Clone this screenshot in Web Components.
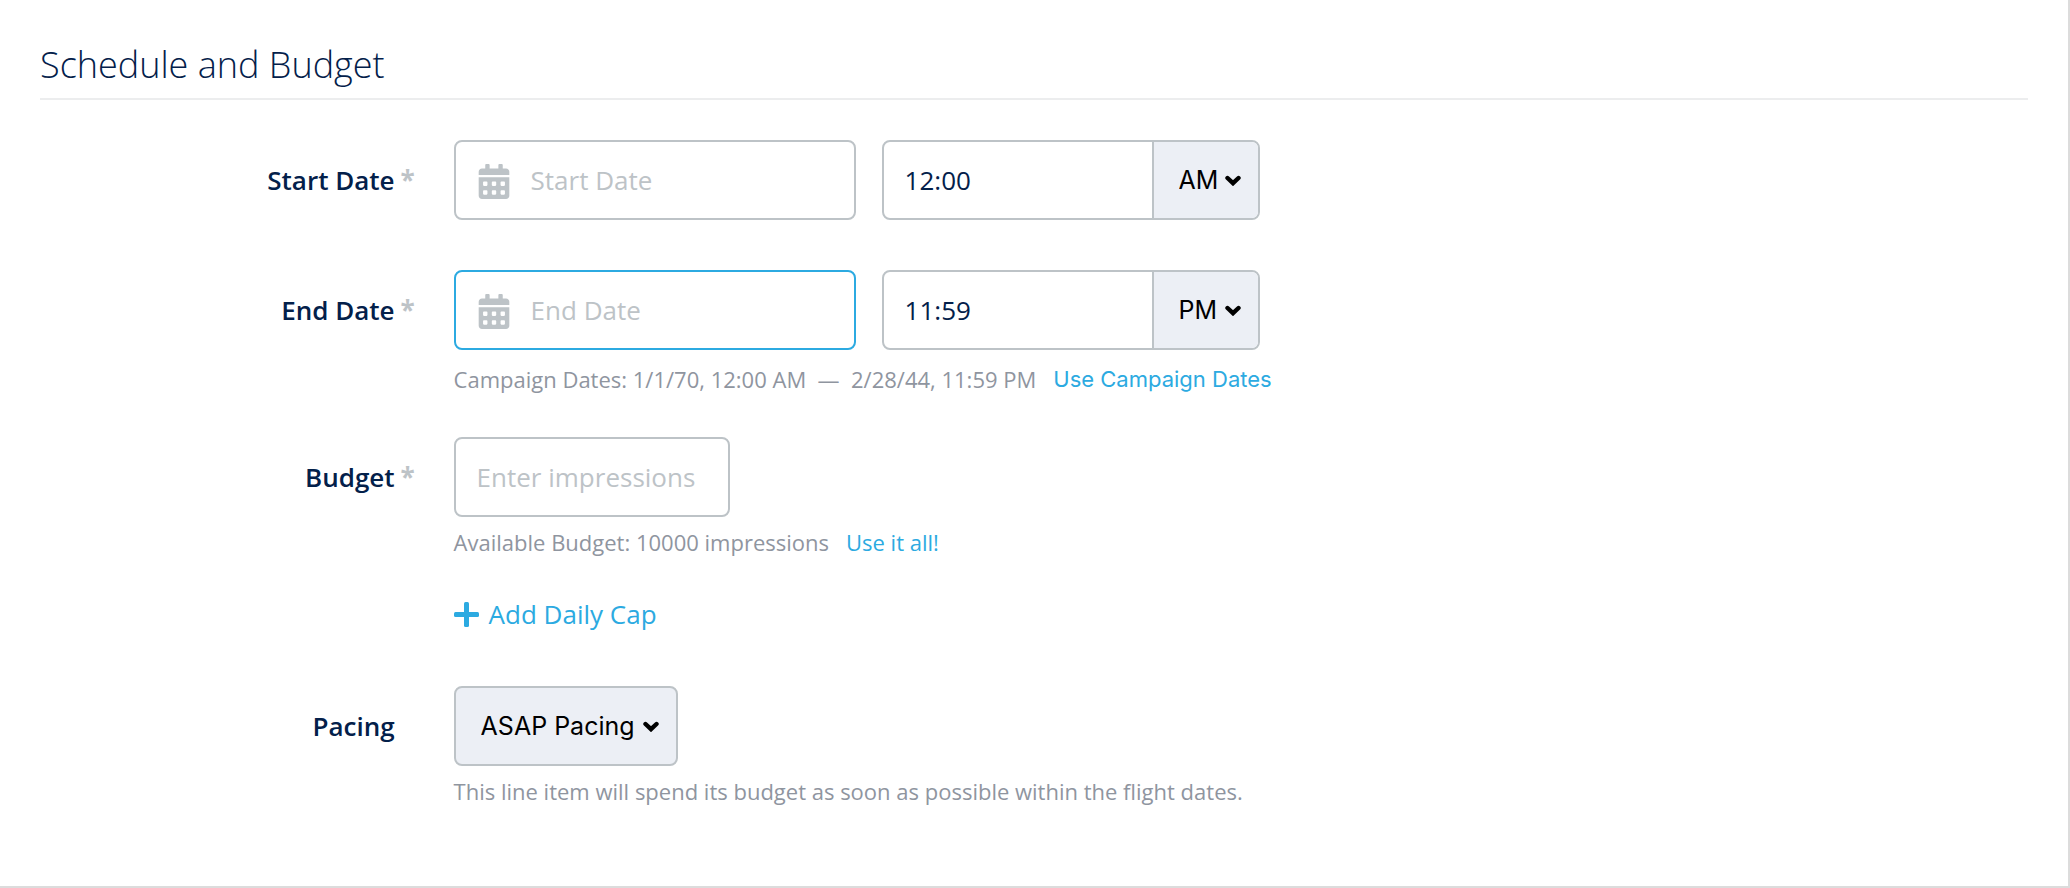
<!DOCTYPE html>
<html lang="en">
<head>
<meta charset="utf-8">
<title>Schedule and Budget</title>
<style>
    body {
        margin: 0;
        --navy: #03204a;
        --gray: #bdc3c7;
        --gray-text: #8f959f;
        --blue: #2caae1;
        --fill: #eceff5;
        background: #fff;
        color: var(--navy);
        font: 26px/36px "Open Sans", sans-serif;
    }
</style>
</head>
<body>
<form-section heading="Schedule and Budget">
    <form-row required spaced>
        <label slot="label" for="start-date">Start Date</label>
        <date-box><input id="start-date" type="text" placeholder="Start Date"></date-box>
        <time-box>
            <input type="text" value="12:00" aria-label="Start time">
            <select-box slot="period" joined>
                <select aria-label="Start time AM or PM"><option selected>AM</option><option>PM</option></select>
            </select-box>
        </time-box>
    </form-row>

    <form-row required>
        <label slot="label" for="end-date">End Date</label>
        <date-box active><input id="end-date" type="text" placeholder="End Date"></date-box>
        <time-box>
            <input type="text" value="11:59" aria-label="End time">
            <select-box slot="period" joined>
                <select aria-label="End time AM or PM"><option>AM</option><option selected>PM</option></select>
            </select-box>
        </time-box>
        <help-text slot="help" tall>
            Campaign Dates: 1/1/70, 12:00 AM &nbsp;—&nbsp; 2/28/44, 11:59 PM
            <text-button slot="action" system>Use Campaign Dates</text-button>
        </help-text>
    </form-row>

    <form-row required>
        <label slot="label" for="budget">Budget</label>
        <text-box><input id="budget" type="text" placeholder="Enter impressions"></text-box>
        <help-text slot="help">
            Available Budget: 10000 impressions
            <text-button slot="action">Use it all!</text-button>
        </help-text>
    </form-row>

    <form-row compact spaced>
        <text-button>
            <svg slot="icon" width="25" height="25" viewBox="0 0 25 25" fill="currentColor" aria-hidden="true">
                <rect x="10" width="5" height="25" rx="1.5"/>
                <rect y="10" width="25" height="5" rx="1.5"/>
            </svg>
            Add Daily Cap
        </text-button>
    </form-row>

    <form-row>
        <label slot="label" for="pacing">Pacing</label>
        <select-box>
            <select id="pacing"><option>ASAP Pacing</option></select>
        </select-box>
        <help-text slot="help">This line item will spend its budget as soon as possible within the flight dates.</help-text>
    </form-row>
</form-section>

<script>
class FormSection extends HTMLElement
{
    constructor()
    {
        super();
        const Shadow = this.attachShadow({mode: "open"});
        Shadow.innerHTML = `
        <h2></h2>
        <div class="rows"><slot></slot></div>
        <style>
            :host {
                display: block;
                box-sizing: border-box;
                min-height: 100vh;
                padding: 40px 0;
                border: solid #dcdcdc;
                border-width: 0 2px 2px 0;
            }

            h2 {
                margin: 0 40px 40px;
                padding-bottom: 8px;
                border-bottom: 2px solid #ecedee;
                font-size: 36px;
                line-height: 50px;
                font-weight: 300;
            }

            .rows {
                display: flex;
                flex-direction: column;
            }
        </style>
        `;
    }

    connectedCallback() {
        this.shadowRoot.querySelector("h2").textContent = this.getAttribute("heading");
    }
}

// label on the left, controls and a help line on the right
class FormRow extends HTMLElement
{
    constructor()
    {
        super();
        const Shadow = this.attachShadow({mode: "open"});
        Shadow.innerHTML = `
        <div class="label">
            <slot name="label"></slot>
            <span class="star"></span>
        </div>
        <div class="content">
            <div class="controls"><slot></slot></div>
            <slot name="help"></slot>
        </div>
        <style>
            :host {
                display: grid;
                grid-template-columns: 20% 1fr;
                column-gap: 40px;
                margin-bottom: 39px;
            }

            :host([spaced]) {
                margin-bottom: 50px;
            }

            .label {
                display: flex;
                justify-content: flex-end;
                gap: 6px;
                height: 80px;
                align-items: center;
                font-weight: 600;
            }

            :host([compact]) .label {
                height: 40px;
            }

            .star {
                width: 13px;
                color: var(--gray);
                font-weight: 700;
            }

            .content {
                display: flex;
                flex-direction: column;
                gap: 10px;
            }

            .controls {
                display: flex;
                gap: 26px;
            }
        </style>
        `;
    }

    connectedCallback() {
        if (this.hasAttribute("required")) {
            this.shadowRoot.querySelector(".star").textContent = "*";
        }
    }
}

const InputStyle = `
    :host {
        display: flex;
        box-sizing: border-box;
        height: 80px;
        border: 2px solid var(--gray);
        border-radius: 8px;
        background: #fff;
    }

    ::slotted(input) {
        flex: 1;
        min-width: 0;
        margin: 0;
        padding: 0 21px;
        border: 0;
        outline: none;
        background: none;
        color: var(--navy);
        font: inherit;
    }

    ::slotted(input)::placeholder {
        color: var(--gray);
        opacity: 1;
    }
`;

class TextBox extends HTMLElement
{
    constructor()
    {
        super();
        const Shadow = this.attachShadow({mode: "open"});
        Shadow.innerHTML = `
        <slot></slot>
        <style>
            ${InputStyle}

            :host {
                width: 276px;
            }
        </style>
        `;
    }
}

class DateBox extends HTMLElement
{
    constructor()
    {
        super();
        const Shadow = this.attachShadow({mode: "open"});
        Shadow.innerHTML = `
        <svg width="32" height="35" viewBox="0 0 448 512" aria-hidden="true">
            <path d="M0 464c0 26.5 21.5 48 48 48h352c26.5 0 48-21.5 48-48V192H0v272zm320-196c0-6.6 5.4-12 12-12h40c6.6 0 12 5.4 12 12v40c0 6.6-5.4 12-12 12h-40c-6.6 0-12-5.4-12-12v-40zm0 128c0-6.6 5.4-12 12-12h40c6.6 0 12 5.4 12 12v40c0 6.6-5.4 12-12 12h-40c-6.6 0-12-5.4-12-12v-40zM192 268c0-6.6 5.4-12 12-12h40c6.6 0 12 5.4 12 12v40c0 6.6-5.4 12-12 12h-40c-6.6 0-12-5.4-12-12v-40zm0 128c0-6.6 5.4-12 12-12h40c6.6 0 12 5.4 12 12v40c0 6.6-5.4 12-12 12h-40c-6.6 0-12-5.4-12-12v-40zM64 268c0-6.6 5.4-12 12-12h40c6.6 0 12 5.4 12 12v40c0 6.6-5.4 12-12 12H76c-6.6 0-12-5.4-12-12v-40zm0 128c0-6.6 5.4-12 12-12h40c6.6 0 12 5.4 12 12v40c0 6.6-5.4 12-12 12H76c-6.6 0-12-5.4-12-12v-40zM400 64h-48V16c0-8.800-7.200-16-16-16h-32c-8.800 0-16 7.200-16 16v48H160V16c0-8.800-7.200-16-16-16h-32c-8.800 0-16 7.200-16 16v48H48C21.500 64 0 85.500 0 112v48h448v-48c0-26.500-21.500-48-48-48z"/>
        </svg>
        <slot></slot>
        <style>
            ${InputStyle}

            :host {
                align-items: center;
                width: 402px;
                padding-left: 22px;
            }

            :host([active]) {
                border-color: var(--blue);
            }

            svg {
                flex: none;
                margin-top: 2px;
                fill: var(--gray);
            }
        </style>
        `;
    }
}

class TimeBox extends HTMLElement
{
    constructor()
    {
        super();
        const Shadow = this.attachShadow({mode: "open"});
        Shadow.innerHTML = `
        <slot></slot>
        <slot name="period"></slot>
        <style>
            ${InputStyle}

            :host {
                width: 378px;
            }
        </style>
        `;
    }
}

class SelectBox extends HTMLElement
{
    constructor()
    {
        super();
        const Shadow = this.attachShadow({mode: "open"});
        Shadow.innerHTML = `
        <slot></slot>
        <svg width="16" height="11" viewBox="0 0 16 11" aria-hidden="true">
            <path d="M2.500 3 8 8.200 13.500 3" fill="none" stroke="#000" stroke-width="4.400" stroke-linecap="round"/>
        </svg>
        <style>
            :host {
                display: grid;
                align-items: center;
                box-sizing: border-box;
                width: 224px;
                height: 80px;
                border: 2px solid var(--gray);
                border-radius: 8px;
                background: var(--fill);
            }

            /* right half of a time box, which draws the outer border */
            :host([joined]) {
                width: 106px;
                height: auto;
                border-width: 0 0 0 2px;
                border-radius: 0 6px 6px 0;
            }

            ::slotted(select) {
                grid-area: 1 / 1;
                width: 100%;
                height: 100%;
                margin: 0;
                padding: 0 16px 0 25px;
                border: 0;
                outline: none;
                appearance: none;
                background: none;
                color: #000;
                font: 25px Inter, sans-serif;
            }

            svg {
                grid-area: 1 / 1;
                justify-self: end;
                margin-right: 17px;
                pointer-events: none;
            }
        </style>
        `;
    }
}

class HelpText extends HTMLElement
{
    constructor()
    {
        super();
        const Shadow = this.attachShadow({mode: "open"});
        Shadow.innerHTML = `
        <span><slot></slot></span>
        <slot name="action"></slot>
        <style>
            :host {
                display: flex;
                flex-wrap: wrap;
                column-gap: 17px;
                color: var(--gray-text);
                font-size: 22px;
                line-height: 30px;
            }

            :host([tall]) {
                line-height: 38px;
            }
        </style>
        `;
    }
}

class TextButton extends HTMLElement
{
    constructor()
    {
        super();
        const Shadow = this.attachShadow({mode: "open"});
        Shadow.innerHTML = `
        <button type="button"><slot name="icon"></slot><span><slot></slot></span></button>
        <style>
            :host {
                display: inline-block;
            }

            button {
                display: flex;
                align-items: center;
                gap: 10px;
                padding: 0;
                border: 0;
                background: none;
                color: var(--blue);
                font: inherit;
                cursor: pointer;
            }

            :host([system]) button {
                font-family: Inter, sans-serif;
            }

            button:hover {
                text-decoration: underline;
            }
        </style>
        `;
    }
}

customElements.define("form-section", FormSection);
customElements.define("form-row", FormRow);
customElements.define("text-box", TextBox);
customElements.define("date-box", DateBox);
customElements.define("time-box", TimeBox);
customElements.define("select-box", SelectBox);
customElements.define("help-text", HelpText);
customElements.define("text-button", TextButton);
</script>
</body>
</html>
